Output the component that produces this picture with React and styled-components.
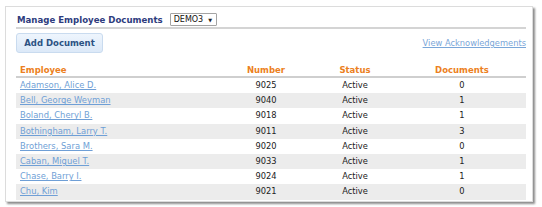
import React from 'react';
import styled, { createGlobalStyle } from 'styled-components';

const GlobalStyle = createGlobalStyle`
  html, body {
    margin: 0;
    padding: 0;
    background: #ffffff;
  }

  body {
    font-family: "DejaVu Sans", Verdana, sans-serif;
  }
`;

const Page = styled.div`
  padding: 6px 0 0 5px;
  width: 542px;
  height: 207px;
  box-sizing: border-box;
`;

const Card = styled.div`
  width: 528px;
  padding: 0 6px 1px 10px;
  box-sizing: border-box;

  background: #ffffff;
  border: 1px solid #dcdcdc;
  box-shadow: 2px 2px 2px rgba(0, 0, 0, 0.45);
`;

const TitleBar = styled.div`
  display: flex;
  align-items: center;
  gap: 7px;
  height: 13px;
  padding: 6px 0 1px;

  border-bottom: 2px solid #d4d4d4;
`;

const Title = styled.div`
  padding-left: 1px;

  font-weight: 700;
  font-size: 8.6px;
  color: #2e3c7e;
  white-space: nowrap;
`;

const Select = styled.div`
  display: flex;
  align-items: center;
  gap: 5px;
  height: 11px;
  padding: 0 4px 0 3px;

  font-size: 8px;
  color: #111111;

  background: #ffffff;
  border: 1px solid #a4a4a4;
  border-radius: 1px;
`;

const Caret = styled.span`
  font-size: 5px;
  color: #222222;
`;

const Toolbar = styled.div`
  display: flex;
  justify-content: space-between;
  align-items: flex-start;
  padding-top: 4px;
`;

const Button = styled.button`
  height: 20px;
  width: 87px;
  padding: 0;

  font-family: inherit;
  font-weight: 700;
  font-size: 8.5px;
  color: #2c5283;

  background: linear-gradient(#eef5fd, #dce9f8);
  border: 1px solid #c9dbef;
  border-radius: 3px;
  cursor: pointer;
`;

const Link = styled.a`
  margin-top: 5px;

  font-size: 8.3px;
  color: #7aa6d8;
  text-decoration: underline;
  cursor: pointer;
`;

const Grid = styled.div`
  display: grid;
  grid-template-columns: 190px 120px 58px 144px;
  align-items: center;
`;

const Head = styled(Grid)`
  margin-top: 10px;
  height: 13px;

  border-bottom: 2px solid #cfcfcf;
`;

const HeadCell = styled.div`
  font-weight: 700;
  font-size: 8.5px;
  color: #ec7f22;
  text-align: ${(p) => (p.$left ? 'left' : 'center')};
  padding-left: ${(p) => p.$pad || 0}px;
`;

const Row = styled(Grid)`
  height: 15.2px;
  line-height: 15px;

  background: ${(p) => (p.$odd ? '#ececec' : '#ffffff')};
`;

const Cell = styled.div`
  font-size: 8.3px;
  color: #222222;
  text-align: center;
  padding-left: ${(p) => p.$pad || 0}px;
`;

const NameCell = styled.div`
  display: flex;
  align-items: center;
  padding-left: 4px;
`;

const Name = styled.a`
  font-size: 8.4px;
  color: #6f9fd6;
  text-decoration: underline;
  cursor: pointer;
`;

const employees = [
  { name: 'Adamson, Alice D.', number: 9025, docs: 0 },
  { name: 'Bell, George Weyman', number: 9040, docs: 1 },
  { name: 'Boland, Cheryl B.', number: 9018, docs: 1 },
  { name: 'Bothingham, Larry T.', number: 9011, docs: 3 },
  { name: 'Brothers, Sara M.', number: 9020, docs: 0 },
  { name: 'Caban, Miguel T.', number: 9033, docs: 1 },
  { name: 'Chase, Barry I.', number: 9024, docs: 1 },
  { name: 'Chu, Kim', number: 9021, docs: 0 },
];

export default function App() {
  return (
    <Page>
      <GlobalStyle />
      <Card>
        <TitleBar>
          <Title>Manage Employee Documents</Title>
          <Select>
            DEMO3 <Caret>▼</Caret>
          </Select>
        </TitleBar>

        <Toolbar>
          <Button>Add Document</Button>
          <Link>View Acknowledgements</Link>
        </Toolbar>

        <Head>
          <HeadCell $left $pad={4}>Employee</HeadCell>
          <HeadCell>Number</HeadCell>
          <HeadCell>Status</HeadCell>
          <HeadCell $pad={12}>Documents</HeadCell>
        </Head>

        {employees.map((e, i) => (
          <Row key={e.number} $odd={i % 2 === 1}>
            <NameCell>
              <Name>{e.name}</Name>
            </NameCell>
            <Cell>{e.number}</Cell>
            <Cell>Active</Cell>
            <Cell $pad={12}>{e.docs}</Cell>
          </Row>
        ))}
      </Card>
    </Page>
  );
}
